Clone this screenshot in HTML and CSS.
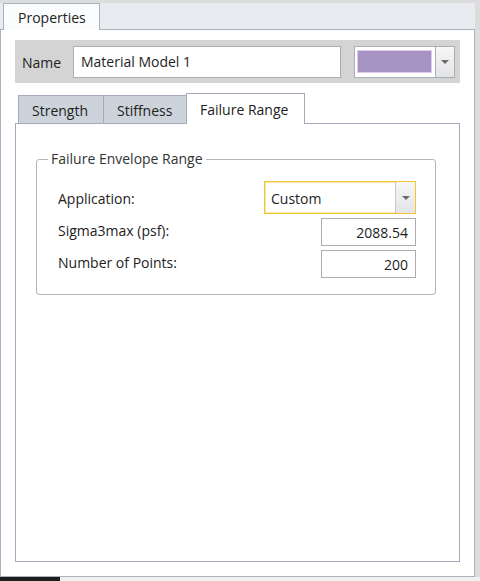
FILE: index.html
```html
<!DOCTYPE html>
<html lang="en">
<head>
<meta charset="utf-8">
<title>Properties</title>
<link rel="stylesheet" href="styles.css">
</head>
<body>
<div class="window">
  <div class="tabstrip">
    <div class="ptab">Properties</div>
  </div>
  <div class="panel">
    <div class="namebar">
      <span class="name-label">Name</span>
      <div class="textbox name-input">Material Model 1</div>
      <div class="color-combo">
        <div class="swatch-wrap"><div class="swatch"></div></div>
        <div class="drop-btn"><span class="arrow"></span></div>
      </div>
    </div>
    <div class="tabrow">
      <div class="tab tab-first">Strength</div>
      <div class="tab tab-mid">Stiffness</div>
      <div class="tab tab-active">Failure Range</div>
    </div>
    <div class="tabcontent">
      <fieldset class="group">
        <legend class="legend">Failure Envelope Range</legend>
        <div class="fields">
          <span class="label label-app">Application:</span>
          <div class="combo">
            <span class="combo-text">Custom</span>
            <div class="combo-btn"><span class="arrow"></span></div>
          </div>
          <span class="label label-up">Sigma3max (psf):</span>
          <div class="textbox num">2088.54</div>
          <span class="label label-up">Number of Points:</span>
          <div class="textbox num">200</div>
        </div>
      </fieldset>
    </div>
  </div>
  <div class="footer"><div class="footer-dark"></div></div>
</div>
</body>
</html>
```

FILE: styles.css
```css
* { box-sizing: border-box; }
html, body { margin: 0; padding: 0; }
body {
  background: #dcdcdc;
  font-family: "Open Sans", "Noto Sans", sans-serif;
  font-size: 14px;
  color: #1e1e1e;
}
.window {
  width: 480px;
  padding-top: 3px;
}
.tabstrip {
  width: 475px;
  height: 26px;
  background: #e8ebef;
  padding-left: 3px;
  display: flex;
  align-items: flex-start;
}
.ptab {
  position: relative;
  z-index: 2;
  width: 97px;
  height: 27px;
  background: #fbfcfd;
  border: 1px solid #a9b1bd;
  border-bottom: none;
  padding-left: 14px;
  padding-top: 2px;
  line-height: 24px;
  color: #222;
}
.panel {
  width: 475px;
  height: 548px;
  background: #fff;
  border: 1px solid #a9b1bd;
  padding: 10px 14px 0 14px;
}
.namebar {
  height: 43px;
  background: #d4d4d4;
  display: flex;
  align-items: center;
}
.name-label {
  width: 58px;
  padding-left: 7px;
  padding-top: 1px;
  color: #222;
}
.textbox {
  background: #fff;
  border: 1px solid #abadb3;
  padding: 0 7px;
  display: flex;
  align-items: center;
  color: #1e1e1e;
}
.name-input {
  width: 268px;
  height: 32px;
}
.color-combo {
  margin-left: 13px;
  width: 101px;
  height: 32px;
  border: 1px solid #a9afb7;
  background: #fff;
  display: flex;
}
.swatch-wrap {
  width: 80px;
  padding: 3px 2px 3px 2px;
}
.swatch {
  width: 75px;
  height: 23px;
  background: #a793c4;
  border: 1px solid #dcccea;
}
.drop-btn {
  flex: 1;
  border-left: 1px solid #a9afb7;
  background: linear-gradient(#f6f6f6, #e3e4e6);
  display: flex;
  align-items: center;
  justify-content: center;
}
.arrow {
  width: 0;
  height: 0;
  border-left: 4px solid transparent;
  border-right: 4px solid transparent;
  border-top: 4px solid #6b6b6b;
  margin-top: 1px;
}
.tabrow {
  margin-top: 10px;
  margin-left: 3px;
  height: 31px;
  margin-bottom: -1px;
  display: flex;
  align-items: flex-start;
  position: relative;
  z-index: 1;
}
.tab {
  height: 28px;
  margin-top: 2px;
  background: #cdd3db;
  border-top: 1px solid #a3acb8;
  border-right: 1px solid #a3acb8;
  color: #222;
  line-height: 27px;
  padding-top: 1px;
}
.tab-first {
  width: 86px;
  border-left: 1px solid #a3acb8;
  padding-left: 13px;
}
.tab-mid {
  width: 83px;
  padding-left: 13px;
}
.tab-active {
  width: 119px;
  height: 31px;
  margin-top: 0;
  margin-left: -1px;
  background: #fff;
  border-left: 1px solid #a3acb8;
  padding-left: 13px;
  line-height: 30px;
}
.tabcontent {
  width: 445px;
  height: 439px;
  border: 1px solid #a3acb8;
  padding: 25px 0 0 20px;
}
.group {
  width: 400px;
  margin: 0;
  padding: 0;
  border: 1px solid #b3b7bd;
  border-radius: 3px;
}
.legend {
  margin-left: 11px;
  padding: 0 3px;
  line-height: 20px;
  color: #333;
}
.fields {
  display: grid;
  grid-template-columns: 1fr auto;
  grid-template-rows: 33px 28px 28px;
  row-gap: 4px;
  align-items: center;
  padding: 12px 19px 16px 21px;
}
.label {
  color: #222;
}
.label-app {
  margin-top: 2px;
}
.label-up {
  margin-top: -4px;
}
.combo {
  justify-self: end;
  width: 152px;
  height: 33px;
  border: 1px solid #f2c630;
  box-shadow: inset 0 0 0 1px #fbe9a8;
  background: #fff;
  display: flex;
}
.combo-text {
  flex: 1;
  padding-left: 6px;
  padding-top: 1px;
  display: flex;
  align-items: center;
}
.combo-btn {
  width: 20px;
  border-left: 1px solid #c6c9cd;
  background: linear-gradient(#f6f6f6, #e3e4e6);
  display: flex;
  align-items: center;
  justify-content: center;
}
.num {
  justify-self: end;
  width: 95px;
  height: 28px;
  justify-content: flex-end;
}
.footer {
  height: 4px;
  background: #f0f0f0;
}
.footer-dark {
  width: 60px;
  height: 4px;
  background: #1e1e1e;
}
```
